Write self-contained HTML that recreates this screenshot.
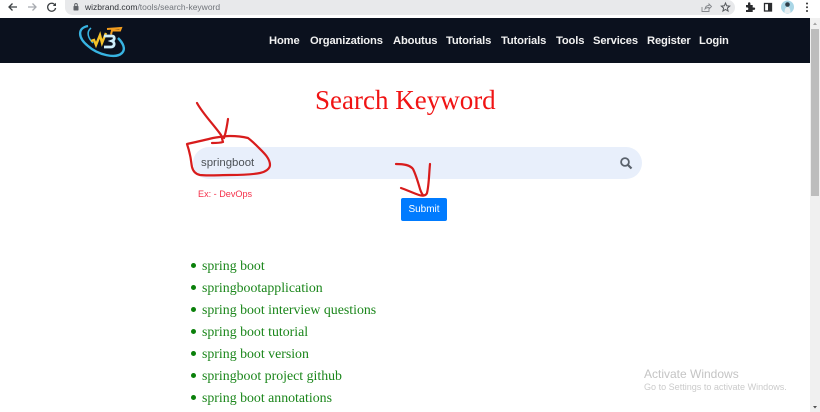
<!DOCTYPE html>
<html><head><meta charset="utf-8"><style>
html,body{margin:0;padding:0;width:820px;height:412px;overflow:hidden;background:#fff;font-family:"Liberation Sans",sans-serif}
.a{position:absolute;white-space:nowrap}
.n{position:absolute;top:34px;color:#f1f1f1;font-size:11.200px;letter-spacing:-.14px;font-weight:bold;line-height:15px;white-space:nowrap}
.l{position:absolute;left:202px;font:13.850px/18px "Liberation Serif",serif;color:#1a861a;white-space:nowrap}
.b{position:absolute;width:5px;height:5px;border-radius:50%;background:#0a800a}
</style></head><body>
<div class="a" style="left:0;top:0;width:820px;height:18px;background:#fff"></div>
<div class="a" style="left:65px;top:0;width:670px;height:15px;background:#e8e9eb;border-radius:0 8px 8px 8px"></div>
<svg class="a" style="left:0;top:0" width="820" height="18" fill="none">
<path d="M17 7H9M12.500 3.500 9 7l3.500 3.500" stroke="#3c4043" stroke-width="1.300"/>
<path d="M28 7h8M32.500 3.500 36 7l-3.500 3.500" stroke="#a8abb0" stroke-width="1.300"/>
<path d="M55 5a4 4 0 1 0 .6 3" stroke="#3c4043" stroke-width="1.300"/><path d="M56 2.800V6h-3.200z" fill="#3c4043"/>
<rect x="73.500" y="6" width="5" height="4.500" rx=".6" fill="#5f6368"/><path d="M74.700 6V4.800a1.300 1.300 0 0 1 2.600 0V6" stroke="#5f6368"/>
<path d="M702 7v4.500h7V9M705 9c.3-2.500 2-3.500 4-3.500V4l2.500 2.500L709 9V7.500c-1.500 0-3 .3-4 1.500z" stroke="#85888c" stroke-width=".9"/>
<path d="m725.500 3 1.200 2.800 3 .3-2.300 2 .7 3-2.600-1.600-2.600 1.600.7-3-2.300-2 3-.3z" stroke="#55585c"/>
<path d="M746 5h2V3.500a1.200 1.200 0 0 1 2.400 0V5h2.300v2.500h1.300a1.200 1.200 0 0 1 0 2.400h-1.300v2.100H746V10h1a1.300 1.300 0 0 0 0-2.600h-1z" fill="#2b2c2f"/>
<rect x="764.500" y="3.500" width="7" height="7.500" stroke="#2b2c2f" stroke-width="1.300"/><rect x="768" y="3.500" width="3.500" height="7.500" fill="#2b2c2f"/>
<circle cx="787.500" cy="7" r="6.500" fill="#a9d6e6"/><path d="M784.500 13c0-4 1-6 3-6s3 2 3 6z" fill="#e8eef0"/><circle cx="787.500" cy="4.500" r="2.300" fill="#2f3d48"/>
<circle cx="807" cy="3.500" r="1" fill="#333"/><circle cx="807" cy="7.300" r="1" fill="#333"/><circle cx="807" cy="11" r="1" fill="#333"/>
</svg>
<div class="a" style="left:85px;top:1px;font-size:8.500px;line-height:13px;color:#70747a"><span style="color:#2f3237">wizbrand.com</span>/tools/search-keyword</div>

<div class="a" style="left:0;top:18px;width:810px;height:45px;background:#0b111e"></div>
<svg class="a" style="left:0;top:0" width="140" height="63" fill="none">
<path d="M88 26C77 28 78 38 88 46c10 9 28 13 34 7 4-4 1-10-4-15" stroke="#38b4e2" stroke-width="2.400"/>
<path d="M91 28c-5 4-3 10 2 15" stroke="#38b4e2" stroke-width="1.500"/>
<path d="M91 41l3-1 2 5 4-10 2 8 4-10" stroke="#f6c228" stroke-width="2.400"/>
<path d="M107 29l14-1-1 2.500h-8l-1 4" stroke="#f29d1f" stroke-width="2"/>
<path d="M104 36h8c3 0 3 4 0 5 3 1 3 6-1 6h-7" stroke="#cfeefa" stroke-width="2.800"/>
</svg>
<div class="n" style="left:269px">Home</div>
<div class="n" style="left:310px">Organizations</div>
<div class="n" style="left:393px">Aboutus</div>
<div class="n" style="left:446px">Tutorials</div>
<div class="n" style="left:501px">Tutorials</div>
<div class="n" style="left:556px">Tools</div>
<div class="n" style="left:593px">Services</div>
<div class="n" style="left:647px">Register</div>
<div class="n" style="left:699px">Login</div>

<div class="a" style="left:810px;top:18px;width:10px;height:394px;background:#f0f0f0"></div>
<div class="a" style="left:811px;top:29px;width:8px;height:167px;background:#bdbdbd"></div>
<svg class="a" style="left:810px;top:18px" width="10" height="394"><path d="M3 7l2-2.500L7 7z" fill="#a3a3a3"/><path d="M3 388h4l-2 2.500z" fill="#505050"/></svg>

<div class="a" style="left:315px;top:83px;font:27px/34px 'Liberation Serif',serif;color:#f01414">Search Keyword</div>
<div class="a" style="left:193px;top:147px;width:449px;height:32px;background:#e8effb;border-radius:16px"></div>
<div class="a" style="left:201px;top:156px;font-size:11.400px;line-height:15px;color:#4d5257">springboot</div>
<svg class="a" style="left:619px;top:156px" width="14" height="14" fill="none"><circle cx="6" cy="6" r="3.900" stroke="#5a626c" stroke-width="1.800"/><path d="M9 9l3.500 3.500" stroke="#5a626c" stroke-width="2.200"/></svg>
<div class="a" style="left:198px;top:188px;font-size:9.100px;line-height:13px;color:#f5304a">Ex: - DevOps</div>
<div class="a" style="left:401px;top:198px;width:46px;height:23px;background:#007bff;border-radius:2px;color:#fff;font-size:10px;line-height:23px;text-align:center">Submit</div>

<svg class="a" style="left:0;top:0" width="820" height="412" fill="none" stroke="#d81c1c" stroke-width="2.200" stroke-linecap="round" stroke-linejoin="round">
<path d="M197 103c6 11 17 22 24 32l2 7c-3 1-7 1-11 1"/>
<path d="M228 119c-1 7-2 13-4 19"/>
<path d="M187 144c9-2 18-4 26-6 6-1 12-2 17-2 8 0 14 1 18 2 4 3 7 6 10 9 5 5 12 11 12 18 0 4-5 7-10 8-10 2-20 2-30 2-10 0-23 1-30 0-5-1-7-4-8-8-1-5-1-8-2-12-1-5-2-8-3-11z"/>
<path d="M396 164c8 0 14 1 17 5 3 6 5 13 7 20 1 3 2 5 3 6"/>
<path d="M430 164c-1 10-1 21-3 29-1 3-5 3-8 2-6-2-12-5-18-7"/>
</svg>

<div class="b" style="left:190.500px;top:263px"></div><div class="l" style="top:257px">spring boot</div>
<div class="b" style="left:190.500px;top:285px"></div><div class="l" style="top:279px">springbootapplication</div>
<div class="b" style="left:190.500px;top:307px"></div><div class="l" style="top:301px">spring boot interview questions</div>
<div class="b" style="left:190.500px;top:329px"></div><div class="l" style="top:323px">spring boot tutorial</div>
<div class="b" style="left:190.500px;top:351px"></div><div class="l" style="top:345px">spring boot version</div>
<div class="b" style="left:190.500px;top:373px"></div><div class="l" style="top:367px">springboot project github</div>
<div class="b" style="left:190.500px;top:395px"></div><div class="l" style="top:389px">spring boot annotations</div>

<div class="a" style="left:644px;top:367px;font-size:12px;line-height:15px;color:#c4c4c4">Activate Windows</div>
<div class="a" style="left:644px;top:381px;font-size:9.050px;line-height:12px;color:#cbcbcb">Go to Settings to activate Windows.</div>
</body></html>
